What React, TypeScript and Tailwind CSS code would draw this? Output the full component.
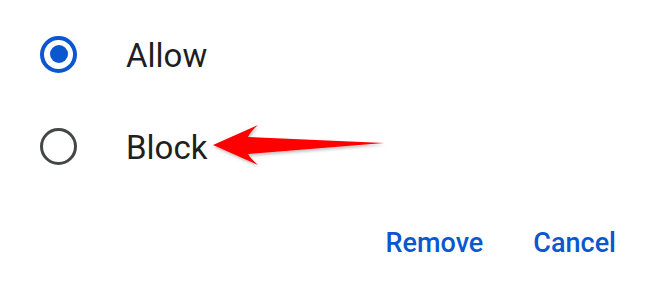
import { useState } from 'react'

const options = ['Allow', 'Block']

function Radio({ checked }: { checked: boolean }) {
  return checked ? (
    <span className="flex h-[37px] w-[37px] items-center justify-center rounded-full border-[4px] border-[#0b57d0]">
      <span className="h-[18px] w-[18px] rounded-full bg-[#0b57d0]" />
    </span>
  ) : (
    <span className="h-[37px] w-[37px] rounded-full border-[3px] border-[#444746]" />
  )
}

export default function App() {
  const [value, setValue] = useState('Allow')

  return (
    <div
      className="relative h-[284px] w-[650px] overflow-hidden bg-white"
      style={{ fontFamily: 'Roboto, "Liberation Sans", sans-serif' }}
    >
      <div className="pt-[8px]">
        {options.map((opt) => (
          <button
            key={opt}
            type="button"
            onClick={() => setValue(opt)}
            className="flex h-[92px] w-full items-center pl-[40px] text-left"
          >
            <Radio checked={value === opt} />
            <span className="ml-[49px] pt-[2px] text-[33px] leading-none text-[#1f1f1f]">{opt}</span>
          </button>
        ))}
      </div>

      <div className="flex justify-end gap-[50px] pr-[34px] pt-[38px]">
        <button type="button" className="text-[27px] font-medium leading-none text-[#0b57d0]">
          Remove
        </button>
        <button type="button" className="text-[27px] font-medium leading-none text-[#0b57d0]">
          Cancel
        </button>
      </div>

      {/* Red annotation arrow pointing at "Block" */}
      <svg
        className="pointer-events-none absolute left-0 top-0"
        width="650"
        height="284"
        viewBox="0 0 650 284"
        aria-hidden="true"
      >
        <defs>
          <filter id="sh" x="-10%" y="-30%" width="120%" height="160%">
            <feDropShadow dx="1" dy="2" stdDeviation="1.5" floodColor="#000" floodOpacity="0.25" />
          </filter>
        </defs>
        <path
          d="M213 145 L258 125 Q251 131 248 137 L384 143 L248 154 Q251 159 258 165 Z"
          fill="#ff0000"
          filter="url(#sh)"
        />
      </svg>
    </div>
  )
}
